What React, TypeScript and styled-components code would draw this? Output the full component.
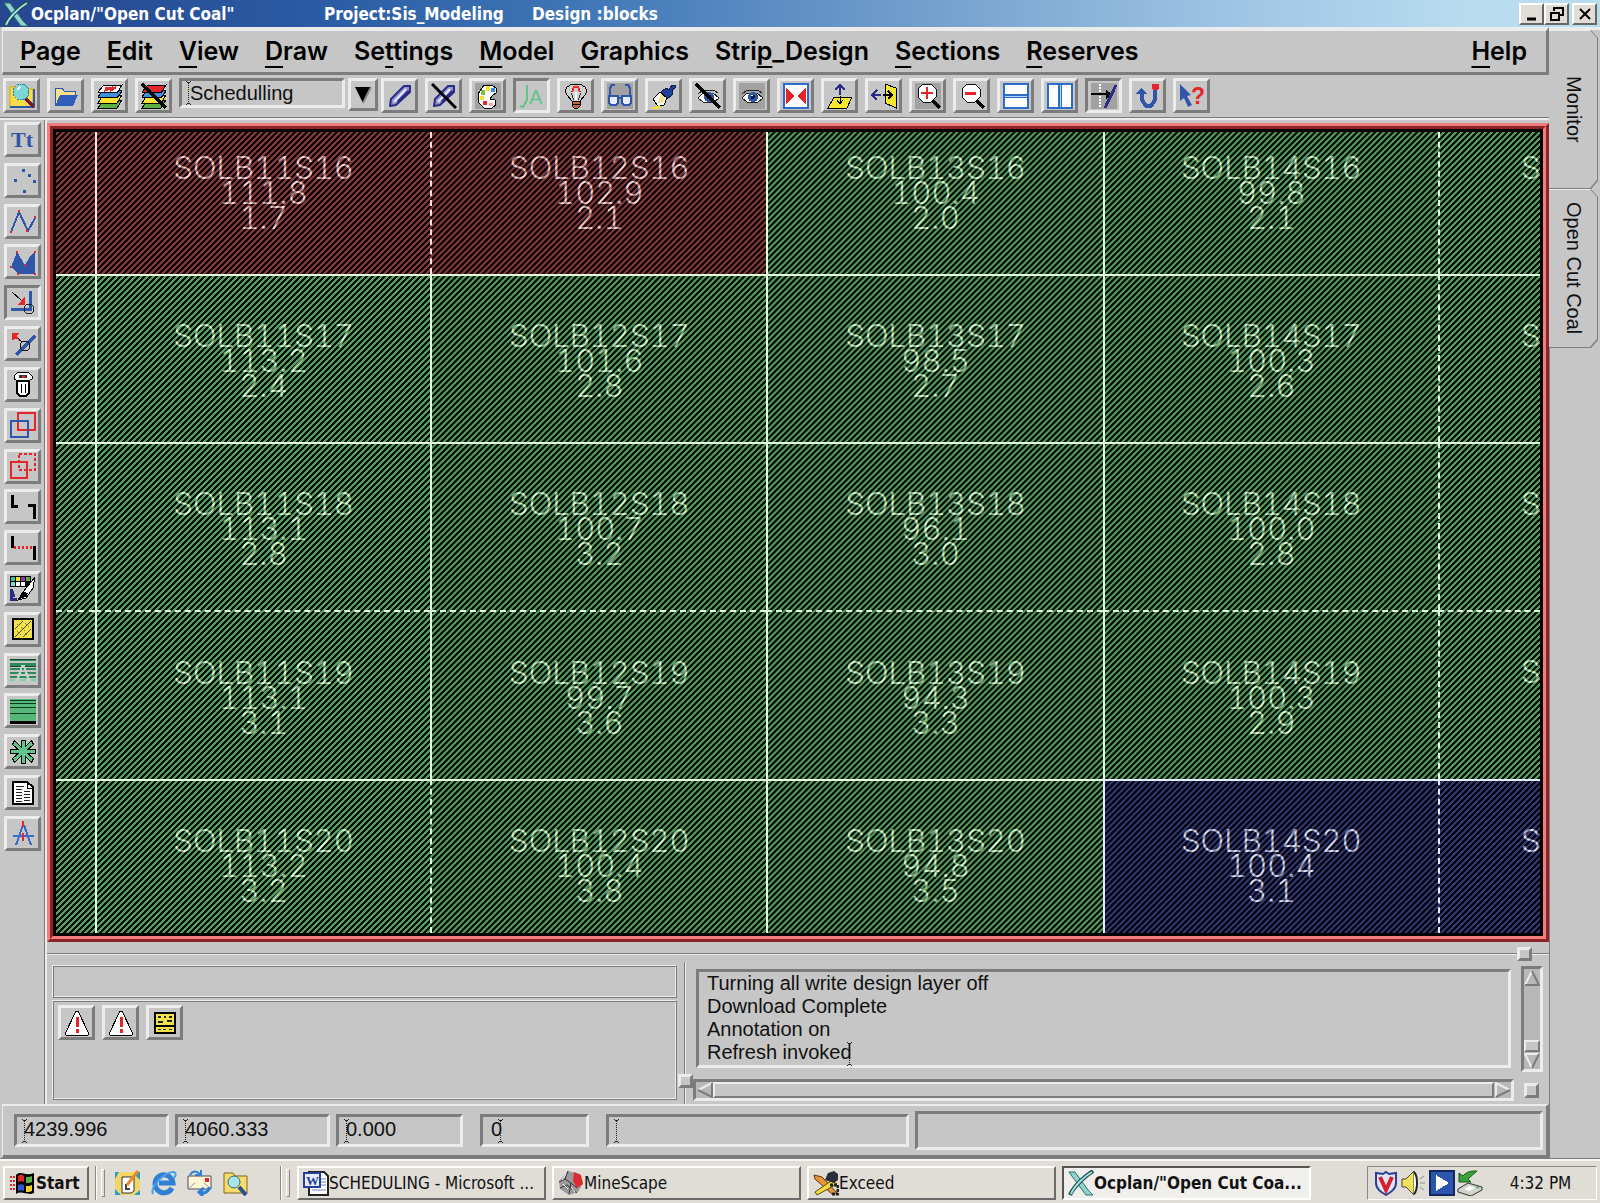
import React from "react";
import styled, { createGlobalStyle, css } from "styled-components";

const face = "#c6c6c6";
const light = "#ececec";
const dark = "#7c7c7c";
const sans = '"Liberation Sans", Arial, sans-serif';
const tahoma = '"DejaVu Sans Condensed", "DejaVu Sans", Tahoma, sans-serif';
const blue = "#2f56a8";
const red = "#e5252a";

const raised = css`
  border-style: solid;
  border-color: ${light} ${dark} ${dark} ${light};
`;
const sunken = css`
  border-style: solid;
  border-color: ${dark} ${light} ${light} ${dark};
`;

const GlobalStyle = createGlobalStyle`
  *, *::before, *::after { box-sizing: border-box; }
  body { margin: 0; background: ${face}; color: #111; font-family: ${sans}; }
  button, input, select { font: inherit; color: inherit; margin: 0; padding: 0; border-radius: 0; }
  svg { display: block; }
`;

const Screen = styled.div`
  display: flex;
  flex-direction: column;
  min-height: 100vh;
`;

/* ---------- title bar ---------- */

const TitleBar = styled.header`
  display: flex;
  align-items: center;
  height: 27px;
  padding: 0 3px;
  background: linear-gradient(90deg, #26478f 0%, #2a5ba4 20%, #3f76b6 36%, #6e9ccb 56%, #9cc3e3 76%, #b9dcef 92%, #b9dcef 100%);
  color: #fff;
  font: bold 17px/22px ${tahoma};
`;
const TitleText = styled.h1`
  display: flex;
  flex: 1;
  margin: 0 0 0 2px;
  font: inherit;
`;
const TitlePart = styled.span<{ $w?: number }>`
  flex: 0 0 ${(p) => (p.$w ? p.$w + "px" : "auto")};
  white-space: nowrap;
`;
const WindowButton = styled.button<{ $apart?: boolean }>`
  display: grid;
  place-items: center;
  width: 25px;
  height: 22px;
  margin-left: ${(p) => (p.$apart ? 3 : 0)}px;
  background: #e0dcd6;
  border: 2px solid;
  border-color: #fff #666 #666 #fff;
`;

/* ---------- window body ---------- */

const Body = styled.div`
  display: flex;
  flex: 1;
`;
const Main = styled.main`
  display: flex;
  flex-direction: column;
  flex: 1;
  min-width: 0;
`;
const MenuBar = styled.nav`
  display: flex;
  align-items: center;
  height: 48px;
  margin-left: 2px;
  padding: 0 6px 2px 4px;
  border-width: 4px 3px 3px 1px;
  ${raised}
`;
const MenuItem = styled.button<{ $end?: boolean }>`
  margin-left: ${(p) => (p.$end ? "auto" : "0")};
  padding: 0 13px;
  border: 0;
  background: none;
  color: #000;
  font: 600 25px/32px Inter, ${sans};
  white-space: nowrap;
`;
const Mnemonic = styled.span`
  text-decoration: underline 2px;
  text-underline-offset: 6px;
  text-decoration-skip-ink: none;
`;
const Toolbar = styled.div`
  display: flex;
  align-items: flex-start;
  gap: 7px;
  padding: 3px 4px 4px 3px;
  border-bottom: 1px solid ${dark};
`;
const ToolButton = styled.button<{ $pressed?: boolean }>`
  display: grid;
  place-items: center;
  flex: none;
  width: 37px;
  height: 35px;
  background: ${face};
  border-width: 3px;
  ${(p) => (p.$pressed ? sunken : raised)}
`;
const ComboLabel = styled.label`
  position: relative;
  width: 166px;
`;
const ComboSelect = styled.select`
  display: block;
  appearance: none;
  width: 100%;
  height: 30px;
  padding-left: 8px;
  background: ${face};
  border-width: 3px;
  ${sunken}
  font: 20px/24px ${sans};
`;
const ComboCaret = styled.span`
  position: absolute;
  left: 6px;
  top: 3px;
  pointer-events: none;
`;
const ComboArrow = styled(ToolButton)`
  width: 30px;
  height: 33px;
  margin: 0 -4px;
`;
const Work = styled.div`
  display: flex;
  flex: 1;
  border-top: 2px solid ${light};
`;
const Rail = styled.div`
  flex: 0 0 45px;
  padding: 2px 3px 0 4px;
  border-right: 1px solid ${dark};
`;
const RailTools = styled.div`
  display: flex;
  flex-direction: column;
  justify-content: space-between;
  height: 729px;
`;
const Content = styled.div`
  display: flex;
  flex-direction: column;
  flex: 1;
  min-width: 0;
  border-left: 2px solid ${light};
`;

/* ---------- block plan ---------- */

const PlanFrame = styled.section`
  display: flex;
  flex: 1;
  margin: 3px 0 11px;
  border: 3px solid;
  border-color: #f57c7c #8c2427 #8c2427 #f57c7c;
`;
const PlanInner = styled.div`
  display: flex;
  flex: 1;
  padding: 3px;
  background: #050002;
  border: 3px solid;
  border-color: #8c2427 #f57c7c #f57c7c #8c2427;
`;
const Plan = styled.div`
  display: grid;
  flex: 1;
  grid-template-columns: 39fr 335fr 336fr 336fr 335fr 102fr;
  grid-template-rows: 142fr 168fr 168fr 169fr 154fr;
`;
type Tone = "red" | "green" | "blue";
const tones: Record<Tone, { stripe: string; gap: string; ink: string; line: string }> = {
  red: { stripe: "#84393d", gap: "#140304", ink: "#ffd6d6", line: "#ffe2e0" },
  green: { stripe: "#55a05c", gap: "#030d05", ink: "#d8ffd2", line: "#e2fbd8" },
  blue: { stripe: "#343971", gap: "#040416", ink: "#dfe3ff", line: "#e4ecff" },
};
const Cell = styled.div<{ $tone: Tone; $left: string; $top: string; $pad?: number; $clip?: boolean }>`
  position: relative;
  display: flex;
  flex-direction: column;
  justify-content: ${(p) => (p.$pad ? "flex-start" : "flex-end")};
  min-width: 0;
  padding: ${(p) => (p.$pad ? `${p.$pad}px 0 0` : "0 0 44px")};
  overflow: hidden;
  text-align: ${(p) => (p.$clip ? "left" : "center")};
  text-indent: ${(p) => (p.$clip ? "81px" : "0")};
  color: ${(p) => tones[p.$tone].ink};
  font: 300 31px/25px Inter, ${sans};
  font-variant-numeric: tabular-nums;
  border: 0 solid ${(p) => tones[p.$tone].line};
  border-left-style: ${(p) => p.$left};
  border-top-style: ${(p) => p.$top};
  border-left-width: 2px;
  border-top-width: 2px;
  background: ${(p) => {
    const t = tones[p.$tone];
    return `linear-gradient(135deg, ${t.gap} 25%, ${t.stripe} 25%, ${t.stripe} 50%, ${t.gap} 50%, ${t.gap} 75%, ${t.stripe} 75%) 0 0 / 6px 6px`;
  }};
  background-attachment: fixed;

  &::after {
    content: "";
    position: absolute;
    inset: 0;
    background: linear-gradient(135deg, #0006 25%, #0000 25%, #0000 50%, #0006 50%, #0006 75%, #0000 75%) 0 0 / 6px 6px fixed;
  }
`;
const CellLine = styled.span`
  display: block;
`;

/* ---------- message area ---------- */

const Lower = styled.section`
  position: relative;
  display: grid;
  grid-template-columns: 637fr 865fr;
  height: 151px;
  border-top: 1px solid ${dark};
  box-shadow: inset 0 1px ${light};
`;
const Grip = styled.span<{ $x: string; $y: number }>`
  position: absolute;
  left: ${(p) => p.$x};
  top: ${(p) => p.$y}px;
  width: 15px;
  height: 14px;
  background: ${face};
  border-width: 3px;
  ${raised}
`;
const LeftPane = styled.div`
  display: flex;
  flex-direction: column;
  gap: 2px;
  padding: 11px 7px 4px 5px;
`;
const Groove = styled.div<{ $grow?: boolean }>`
  display: flex;
  align-items: flex-start;
  gap: 7px;
  flex: ${(p) => (p.$grow ? "1" : "0 0 33px")};
  padding: 4px 5px;
  border: 1px solid;
  border-color: ${light} ${dark} ${dark} ${light};
  box-shadow: inset 1px 1px ${dark}, inset -1px -1px ${light};
`;
const RightPane = styled.div`
  position: relative;
  display: grid;
  grid-template-columns: 1fr 24px;
  grid-template-rows: 106px 22px;
  gap: 7px;
  margin-top: 8px;
  padding: 4px 4px 0 8px;
  border-left: 1px solid ${dark};
  box-shadow: inset 1px 0 ${light};
`;
const Log = styled.div`
  margin: 3px 3px 4px;
  padding: 0 8px;
  border-width: 3px;
  ${sunken}
  font: 20px/23px ${sans};
`;
const LogLine = styled.p`
  display: flex;
  margin: 0;
`;
const LogCaret = styled.span`
  margin: 1px 0 -1px -6px;
`;
const Scroll = styled.div<{ $vertical?: boolean }>`
  display: flex;
  flex-direction: ${(p) => (p.$vertical ? "column" : "row")};
  border-width: 3px;
  background: #b8b8b8;
  ${sunken}
  width: ${(p) => (p.$vertical ? "22px" : "auto")};
`;
const ScrollArrow = styled.button`
  display: grid;
  place-items: center;
  flex: 0 0 17px;
  border: 0;
  background: none;
`;
const Thumb = styled.span<{ $bar?: boolean }>`
  flex: ${(p) => (p.$bar ? "1" : "0 0 12px")};
  margin-top: ${(p) => (p.$bar ? "0" : "auto")};
  background: ${face};
  border-width: 2px;
  ${raised}
`;
const Corner = styled.span`
  width: 15px;
  height: 15px;
  margin: 4px 0 0 3px;
  background: ${face};
  border-width: 3px;
  ${raised}
`;

/* ---------- status bar ---------- */

const StatusBar = styled.footer`
  display: flex;
  align-items: center;
  height: 54px;
  margin-left: 2px;
  padding: 0 3px 0 11px;
  border-width: 2px 3px 3px 1px;
  ${raised}
`;
const StatusField = styled.label<{ $w: number; $after?: number; $tall?: boolean }>`
  display: flex;
  align-items: center;
  flex: ${(p) => `${p.$w} 1 ${p.$w}px`};
  min-width: 0;
  height: ${(p) => (p.$tall ? 39 : 33)}px;
  margin-right: ${(p) => p.$after || 0}px;
  padding-left: 4px;
  border-width: 3px;
  ${sunken}
`;
const StatusInput = styled.input<{ $short?: boolean }>`
  flex: ${(p) => (p.$short ? "0 0 12px" : "1")};
  min-width: 0;
  width: ${(p) => (p.$short ? "12px" : "auto")};
  margin-left: ${(p) => (p.$short ? "4px" : "-4px")};
  margin-right: ${(p) => (p.$short ? "-6px" : "0")};
  padding: 0 0 3px;
  border: 0;
  background: none;
  font: 20px/24px ${sans};
`;

/* ---------- side tabs ---------- */

const TabStrip = styled.aside`
  flex: 0 0 51px;
  display: flex;
  flex-direction: column;
  border-top: 3px solid ${light};
`;
const SideTab = styled.button`
  position: relative;
  flex: none;
  width: 49px;
  height: 159px;
  border: 0;
  background: ${dark};
  font: 20px/24px ${sans};
  clip-path: polygon(0 0, 42px 0, 100% 8px, 100% calc(100% - 8px), 42px 100%, 0 100%);

  &::before {
    content: "";
    position: absolute;
    inset: 0 1px 1px 0;
    background: ${face};
    border-top: 1px solid ${light};
    clip-path: polygon(0 0, 41px 0, 100% 8px, 100% calc(100% - 8px), 41px 100%, 0 100%);
  }
`;
const SideTabText = styled.span`
  position: relative;
  display: block;
  width: 24px;
  margin-left: 13px;
  writing-mode: vertical-rl;
  white-space: nowrap;
`;
const TabRest = styled.div`
  flex: 1;
  border-left: 1px solid ${dark};
`;

/* ---------- taskbar ---------- */

const Taskbar = styled.footer`
  display: flex;
  align-items: center;
  height: 45px;
  padding: 3px 3px 0;
  background: #e0dcd6;
  border-top: 1px solid ${dark};
  box-shadow: inset 0 2px #f8f6f2;
  font: 17px/22px ${tahoma};
`;
const TaskButton = styled.button<{ $active?: boolean }>`
  display: flex;
  align-items: center;
  flex: 249 1 0;
  min-width: 0;
  max-width: 249px;
  height: 34px;
  margin-right: 6px;
  padding: 0 4px;
  border: 2px solid;
  border-color: ${(p) => (p.$active ? "#555 #fff #fff #555" : "#fff #6b6b6b #6b6b6b #fff")};
  background: ${(p) => (p.$active ? "#f1efec" : "#e0dcd6")};
  font-weight: ${(p) => (p.$active ? "bold" : "normal")};
  white-space: nowrap;
`;
const StartButton = styled.button`
  display: flex;
  align-items: center;
  gap: 1px;
  width: 86px;
  height: 34px;
  padding-left: 4px;
  border: 2px solid;
  border-color: #fff #6b6b6b #6b6b6b #fff;
  background: #e0dcd6;
  font-weight: bold;
`;
const Divider = styled.span`
  width: 10px;
  height: 34px;
  margin: 0 7px 0 6px;
  border-left: 1px solid #8c8984;
  box-shadow: inset 1px 0 #fff;

  &::after {
    content: "";
    display: block;
    width: 4px;
    height: 28px;
    margin: 3px 0 0 5px;
    border: 1px solid;
    border-color: #fff #8c8984 #8c8984 #fff;
  }
`;
const QuickLaunch = styled.div`
  display: flex;
  gap: 10px;
  width: 162px;
  padding-left: 3px;
`;
const QuickButton = styled.button`
  border: 0;
  background: none;
`;
const Tray = styled.div`
  display: flex;
  align-items: center;
  gap: 2px;
  width: 230px;
  height: 34px;
  margin-left: auto;
  padding-left: 5px;
  border: 1px solid;
  border-color: #8c8984 #fff #fff #8c8984;
`;
const Clock = styled.time`
  margin: 0 auto;
`;

/* ---------- drawings ---------- */

const Pic = ({ children, shade, soft }: { children: React.ReactNode; shade?: boolean; soft?: boolean }) => (
  <svg width="26" height="26" viewBox="0 0 26 26" fill="none" shapeRendering={soft ? "auto" : "crispEdges"} aria-hidden="true">
    {shade && <rect width="26" height="26" fill="#a2a2a2" />}
    {children}
  </svg>
);

const Caret = () => (
  <svg width="7" height="24" viewBox="0 0 7 24" fill="none" stroke="#222" shapeRendering="crispEdges" aria-hidden="true">
    <path d="M1 0.5h1M5 0.5h1M2 1.5h3M2 22.5h3M1 23.5h1M5 23.5h1" />
    <path d="M3.5 2v20" strokeDasharray="1 1" />
  </svg>
);

const Tri = ({ dir }: { dir: "up" | "down" | "left" | "right" }) => {
  const shapes = {
    up: ["M8 1L1 15", "M1 15H15L8 1"],
    down: ["M8 15L1 1H15", "M15 1L8 15"],
    left: ["M1 8L15 1", "M15 1V15L1 8"],
    right: ["M1 15V1L15 8", "M15 8L1 15"],
  }[dir];
  return (
    <svg width="16" height="16" viewBox="0 0 16 16" fill="none" strokeWidth="2" aria-hidden="true">
      <path d={shapes[0]} stroke={light} />
      <path d={shapes[1]} stroke={dark} />
    </svg>
  );
};

const XLogo = () => (
  <Pic soft>
    <path d="M1 2h6l13 18 5 5h-7L6 9z" fill="#8fd3cb" stroke="#2d6f74" />
    <path d="M25 1C17 6 6 16 2 25" stroke="#1b4a55" strokeWidth="4" />
    <path d="M24 2C17 6 6 16 3 24" stroke="#a4e4dc" strokeWidth="2" />
  </Pic>
);
const sheets = (top: string) => (
  <>
    <path d="M6 17h19l-5 8H1z" fill="#5cb043" stroke="#000" />
    <path d="M6 12h19l-5 8H1z" fill="#f6e332" stroke="#000" />
    <path d="M6 7l6 1 6-1 7 1-5 7-6-1-6 1-7-1z" fill="#3f8fe0" stroke="#000" />
    <path d="M7 2l6 1 12-1-5 8-6-1-6 1-7-1z" fill={top} stroke="#000" />
  </>
);
const Preview = () => (
  <Pic>
    <path d="M1 4h10v2h13v18H1z" fill="#f8dc4a" stroke="#e0c030" strokeWidth="2" />
    <path d="M1 24h24V6" stroke="#2f56a8" strokeWidth="2" />
    <path d="M15 14l10 10" stroke="#7a1c2c" strokeWidth="4" />
    <circle cx="12" cy="9" r="8" fill="#7fd6da" stroke="#2a7f8c" strokeDasharray="2 1" />
    <path d="M8 7l3-3" stroke="#fff" strokeWidth="2" />
  </Pic>
);
const OpenFolder = () => (
  <Pic>
    <path d="M2 22V5h7l2 3h11v5" fill="#f8e08a" stroke="#2f56a8" />
    <path d="M7 12h18l-5 11H2z" fill="#2f5fb8" />
  </Pic>
);
const Layers = () => (
  <Pic>
    {sheets("#fff")}
    <path d="M7 8l9-4M13 8l6-4M8 5h4" stroke={red} strokeWidth="2" />
  </Pic>
);
const LayersOff = () => (
  <Pic>
    {sheets(red)}
    <path d="M1 1l24 24" stroke="#000" strokeWidth="3" />
  </Pic>
);
const clip = (
  <g strokeLinejoin="round">
    <path d="M3 23l1-7L17 3h6v6L9 22z" fill="#8f96cc" stroke="#2c2c86" strokeWidth="2" />
    <path d="M7 19L19 6" stroke="#e6e8f6" strokeWidth="2" />
    <path d="M11 19L22 8" stroke="#2c2c86" strokeWidth="3" />
  </g>
);
const ClipIcon = () => <Pic soft>{clip}</Pic>;
const ClipOff = () => (
  <Pic soft>
    {clip}
    <path d="M1 1l24 24" stroke="#000" strokeWidth="3" />
  </Pic>
);
const Palette = () => (
  <Pic shade>
    <path d="M9 2h8l4 3v5l-4 3-2 3 5 1 1 5-4 3H9l-5-5-1-9z" fill="#fff" stroke="#000" strokeWidth="1" />
    <path d="M11 3h4v5h-4z" fill="#f4e22e" />
    <path d="M6 7h4v5H6z" fill="#7cc142" />
    <path d="M16 5h4v4h-4z" fill="#2f8fe0" />
    <path d="M5 13h4v4H5z" fill="#f4e22e" />
    <path d="M8 18h4v4H8z" fill={red} />
    <path d="M14 20h4v3h-4z" fill="#f7a8b0" />
  </Pic>
);
const Ja = () => (
  <Pic soft>
    <path d="M8 2v15l-4 7-3-1" stroke="#5fc58a" strokeWidth="2" />
    <text x="10" y="21" fontFamily="Liberation Sans" fontSize="20" fill="#5fc58a">A</text>
  </Pic>
);
const Bulb = () => (
  <Pic>
    <path d="M9 1h8l5 3 2 4-2 4-5 6H9l-5-6-2-4 2-4z" fill="#cfcfcf" stroke="#000" strokeWidth="1" />
    <path d="M13 9v8" stroke="#fff" strokeWidth="2" />
    <path d="M9 9l2-5h4l2 5" stroke={red} strokeWidth="2" />
    <path d="M11 17L8 10M15 17l3-7" stroke="#333" strokeWidth="1" />
    <path d="M9 18h8v5l-2 2h-4l-2-2z" fill="#c7643a" stroke="#000" />
    <path d="M9 21h8" stroke="#000" />
  </Pic>
);
const Glasses = () => (
  <Pic shade>
    <path d="M2 13h9v7l-2 2H4l-2-2zM15 13h9v7l-2 2h-5l-2-2z" fill="#e6ecfa" stroke={blue} strokeWidth="2" />
    <path d="M11 15h4M3 13V5l2-3h3M23 13V5l-2-3h-3" stroke={blue} strokeWidth="2" />
  </Pic>
);
const Torch = () => (
  <Pic>
    <path d="M15 5l3 2 3-5h3v3l-3 2v5l-5 4-6-7z" fill="#1f3f9a" stroke="#10204e" />
    <path d="M9 9l7 6-3 7H6l-4-6z" fill="#fff" stroke="#000" />
    <path d="M10 11l4 4-2 5H7z" fill="#f2e39a" />
    <path d="M1 25h5l3-2" stroke="#f4e22e" strokeWidth="3" />
  </Pic>
);
const eye = (
  <>
    <path d="M3 15l5-5h10l6 5-5 4H8z" fill="#fff" stroke="#222" />
    <circle cx="14" cy="14" r="5" fill={blue} />
    <circle cx="14" cy="14" r="2" fill="#101840" />
    <path d="M12 12h2v1h-2z" fill="#fff" />
    <path d="M3 11l5-4h11l4 3" stroke="#222" />
  </>
);
const EyeOff = () => (
  <Pic>
    {eye}
    <path d="M1 1l24 24" stroke="#000" strokeWidth="3" />
  </Pic>
);
const Eye = () => <Pic shade>{eye}</Pic>;
const FitView = () => (
  <Pic>
    <rect x="1" y="1" width="24" height="24" fill="#fff" stroke="#2a6cc8" strokeWidth="2" />
    <path d="M3 5l9 8-9 8zM23 5l-9 8 9 8z" fill={red} />
  </Pic>
);
const PlaneUp = () => (
  <Pic>
    <path d="M7 14h18l-5 11H1z" fill="#f7e82e" stroke="#000" strokeWidth="1" />
    <path d="M13 12V3" stroke="#2c2c86" strokeWidth="2" />
    <path d="M8 7l5-5 5 5" stroke="#2c2c86" strokeWidth="2" />
    <path d="M13 13v7M10 17l3 4 3-4" stroke="#000" strokeWidth="1" />
  </Pic>
);
const PlaneSide = () => (
  <Pic>
    <path d="M14 1l11 4v20l-11-5z" fill="#f7e82e" stroke="#000" />
    <path d="M10 12H2M6 7l-5 5 5 5" stroke="#2c2c86" strokeWidth="2" />
    <path d="M12 12h8M17 8l4 4-4 4" stroke="#000" strokeWidth="2" />
  </Pic>
);
const Magnify = ({ plus }: { plus?: boolean }) => (
  <Pic shade={plus}>
    <path d="M17 17l8 8" stroke="#000" strokeWidth="4" />
    <path d="M8 1h8l5 5v8l-5 5H8l-5-5V6z" fill="#fff" stroke="#111" />
    <path d={plus ? "M12 4v12M6 10h12" : "M6 10h11"} stroke={red} strokeWidth={plus ? 2 : 3} />
  </Pic>
);
const Panes = ({ vertical }: { vertical?: boolean }) => (
  <Pic>
    <g stroke="#2a6cc8" strokeWidth="2">
      <rect x="1" y="1" width="24" height="24" fill="#fff" />
      <path d={vertical ? "M13 1v24" : "M1 13h24"} strokeWidth="4" />
      <path d={vertical ? "M13 2v22" : "M2 13h22"} stroke="#b4d4f4" strokeWidth="1" />
    </g>
  </Pic>
);
const Snap = () => (
  <Pic shade>
    <path d="M9 1v24" stroke="#fff" strokeWidth="2" strokeDasharray="2 1" />
    <path d="M0 11h20" stroke="#000" strokeWidth="2" />
    <path d="M15 7l6 4-6 5z" fill="#000" />
    <path d="M25 2L14 25" stroke="#2c2c86" strokeWidth="3" />
  </Pic>
);
const Undo = () => (
  <Pic>
    <path d="M7 9v8l4 6h5l4-6V7" stroke={blue} strokeWidth="4" />
    <path d="M1 11l5-6 7 6z" fill={blue} />
    <path d="M17 1h7v5l-2 1h-3l-2-1z" fill={red} />
  </Pic>
);
const Help = () => (
  <Pic soft>
    <path d="M1 1l11 11-4 1 5 9-4 2-4-9-4 3z" fill={blue} />
    <text x="12" y="21" fontFamily="Liberation Sans" fontWeight="bold" fontSize="23" fill={red}>?</text>
  </Pic>
);

const TextTool = () => (
  <Pic soft>
    <text x="1" y="20" fontFamily="Liberation Serif" fontWeight="bold" fontSize="22" fill={blue}>Tt</text>
  </Pic>
);
const Points = () => (
  <Pic>
    <path d="M12 2h3v3h-3zM18 7h3v3h-3zM4 12h3v3H4zM23 13h3v3h-3zM13 23h3v3h-3z" fill={blue} />
  </Pic>
);
const Polyline = () => (
  <Pic>
    <path d="M1 24L9 4l9 19 7-13" stroke={blue} strokeWidth="2" />
    <path d="M0 23h2v2H0zM8 2h2v2H8zM16 22h2v2h-2zM24 8h2v2h-2z" fill={red} />
  </Pic>
);
const Polygon = () => (
  <Pic>
    <path d="M1 18L7 3l8 13 6-10 4-3v22H8z" fill={blue} />
    <path d="M0 17h2v2H0zM6 2h2v2H6zM14 15h2v2h-2zM24 2h2v2h-2zM7 24h2v2H7zM24 24h2v2h-2z" fill={red} />
  </Pic>
);
const SnapCorner = () => (
  <Pic>
    <path d="M20 1v18H1" stroke={blue} strokeWidth="3" />
    <circle cx="19" cy="19" r="5" stroke="#222" strokeWidth="1" />
    <path d="M2 2l9 8" stroke="#000" strokeWidth="1" />
    <path d="M15 6v9H7l4-4z" fill={red} />
  </Pic>
);
const SnapLine = () => (
  <Pic>
    <path d="M25 5L6 24" stroke={blue} strokeWidth="3" />
    <circle cx="15" cy="15" r="5" stroke="#111" strokeWidth="1" />
    <path d="M12 11L6 6" stroke="#000" strokeWidth="1" />
    <path d="M2 2h7L6 5l2 3-3-1-2 2z" fill={red} stroke={red} />
  </Pic>
);
const Bin = () => (
  <Pic>
    <path d="M8 1h10l4 4v3l-4 2H8L4 8V5z" fill="#fff" stroke="#000" strokeWidth="1" />
    <path d="M7 10h12v12l-3 3h-6l-3-3z" fill="#fff" stroke="#000" strokeWidth="2" />
    <path d="M9 4h8v3H9z" fill="#333" />
    <path d="M12 5h3v2h-3z" fill={red} />
    <path d="M11 13v9M15 13v9" stroke="#000" />
  </Pic>
);
const CopyShape = () => (
  <Pic>
    <rect x="8" y="1" width="17" height="17" stroke={red} strokeWidth="2" />
    <rect x="1" y="9" width="17" height="16" stroke={blue} strokeWidth="2" />
  </Pic>
);
const MoveShape = () => (
  <Pic>
    <rect x="9" y="1" width="16" height="16" stroke={red} strokeWidth="2" strokeDasharray="3 2" />
    <rect x="1" y="9" width="16" height="16" stroke={red} strokeWidth="2" />
  </Pic>
);
const BreakLine = () => (
  <Pic>
    <path d="M2 1v11h6M18 11h6v14" stroke="#000" strokeWidth="3" />
  </Pic>
);
const JoinLine = () => (
  <Pic>
    <path d="M2 1v12M24 11v14" stroke="#000" strokeWidth="3" />
    <path d="M4 12h19" stroke={red} strokeWidth="3" strokeDasharray="2 2" />
  </Pic>
);
const Swatches = () => (
  <Pic>
    <rect y="1" width="21" height="11" fill="#000" />
    <path d="M1 2h4v4H1z" fill="#2fc0a8" />
    <path d="M6 2h4v4H6z" fill="#f4e22e" />
    <path d="M11 2h4v4h-4z" fill="#8d3aa0" />
    <path d="M16 2h4v4h-4z" fill="#5cb043" />
    <path d="M1 7h4v4H1z" fill="#7fd6da" />
    <path d="M6 7h4v4H6zM11 7h4v4h-4z" fill="#fff" />
    <path d="M1 14v10h6M2 16l2 6" stroke="#2c2c86" strokeWidth="3" />
    <path d="M25 2L13 17l-5 8 8-2 7-10z" fill="#fff" stroke="#000" strokeWidth="1" />
    <path d="M13 17l-4 7 7-2 2-4z" fill="#000" />
  </Pic>
);
const Pattern = () => (
  <Pic>
    <rect x="3" y="3" width="20" height="20" fill="#f4e24a" stroke="#000" strokeWidth="2" />
    <path d="M5 21L21 5M5 13l8-8M13 21l8-8" stroke="#4a4a30" />
    <path d="M7 15l4 4M11 11l4 4M15 7l4 4M7 8l3 3M15 17l3 3" stroke="#8a7a20" strokeDasharray="1 1" />
  </Pic>
);
const LineText = () => (
  <Pic>
    <path d="M0 2h26v2H0zM0 6h26v3H0zM0 11h26v2H0zM0 15h26v2H0zM0 19h26v2H0z" fill="#2d8a5a" />
    <path d="M0 2h26M0 9h26" stroke="#114a2a" />
    <path d="M7 24l5-15h2l5 15M9 18h8" stroke="#c6d2c8" strokeWidth="2" />
    <path d="M0 23h5M10 23h6M21 23h5" stroke="#7ed09a" strokeWidth="2" />
  </Pic>
);
const LineStyle = () => (
  <Pic>
    <rect y="1" width="26" height="24" fill="#55b878" />
    <path d="M0 2h26M0 5h26M0 9h26M0 15h26" stroke="#0a3a1c" strokeWidth="1" />
    <path d="M0 24h26" stroke="#000" strokeWidth="3" />
  </Pic>
);
const Star = () => (
  <Pic>
    <path d="M13 1v24M0 12h26M3 3l20 19M23 3L3 22" stroke="#000" strokeWidth="5" />
    <path d="M13 2v22M1 12h24M4 4l18 17M22 4L4 21" stroke="#5fc58a" strokeWidth="3" />
  </Pic>
);
const Report = () => (
  <Pic>
    <path d="M3 2h14l6 5v17H3z" fill="#fff" stroke="#000" strokeWidth="2" />
    <path d="M17 2v6h6" stroke="#000" />
    <path d="M6 6h8M6 9h6M14 11h6M6 12h6M14 14h6M6 15h6M14 17h6M6 18h6M14 20h6M6 21h6" stroke="#222" />
  </Pic>
);
const Compass = () => (
  <Pic>
    <path d="M13 5L6 25M14 5l7 20M3 16h21" stroke="#3c68c8" strokeWidth="2" />
    <path d="M13 1v6M13 13v8" stroke={red} strokeWidth="2" />
  </Pic>
);

const Warning = () => (
  <Pic>
    <path d="M12 1h2l11 23-1 1H2l-1-1z" fill="#fff" stroke="#000" strokeWidth="1" />
    <path d="M13 7v10M13 19v4" stroke={red} strokeWidth="3" />
  </Pic>
);
const Console = () => (
  <Pic>
    <rect x="3" y="3" width="20" height="20" fill="#f4e24a" stroke="#000" strokeWidth="2" />
    <path d="M3 16h20" stroke="#000" strokeWidth="2" />
    <path d="M6 6h3v2H6zM12 6h2v2h-2zM17 6h3v2h-3zM6 11h5v2H6zM15 10h5v2h-5zM6 19h3v1H6zM11 19h3v1h-3zM17 19h3v1h-3z" fill="#222" />
  </Pic>
);

const WinFlag = () => (
  <Pic soft>
    <path d="M1 7h5M1 11h5M1 15h5M1 19h5" stroke="#e5252a" strokeWidth="2" strokeDasharray="2 1" />
    <path d="M7 5c5-5 9 2 18-2v20c-7 3-12-3-18 1z" fill="#000" />
    <path d="M9 6c3-2 4-1 6 0v6c-2-1-4-1-6 0z" fill={red} />
    <path d="M17 7c2 0 4 0 6-1v6c-2 1-4 1-6 1z" fill="#5cb043" />
    <path d="M9 15c2-1 4-1 6 0v6c-2-1-4-1-6 0z" fill="#2a5bd0" />
    <path d="M17 16c2 0 4 0 6-1v6c-2 1-4 1-6 1z" fill="#f4d22e" />
  </Pic>
);
const Desk = () => (
  <Pic soft>
    <rect y="2" width="25" height="23" fill="#2a9bc4" />
    <path d="M4 2h17v4l4 4v10l-6 5H6l-6-6V9z" fill="#f3d566" />
    <path d="M7 7h12v14l-3 2H7z" fill="#fff" stroke="#333" />
    <path d="M11 14v5h4" stroke="#444" strokeWidth="2" />
    <path d="M23 1L12 15" stroke="#e58a24" strokeWidth="3" />
  </Pic>
);
const Explorer = () => (
  <Pic soft>
    <path d="M21 18A9 9 0 1 1 22 13H8" stroke="#2f7fd6" strokeWidth="5" />
    <path d="M2 24C-1 17 13 2 23 2c3 1 1 5 0 6" stroke="#4aa0e6" strokeWidth="2" />
  </Pic>
);
const Mail = () => (
  <Pic soft>
    <path d="M1 6h23v13H1z" fill="#fff5d4" stroke="#4a4a60" />
    <path d="M1 19l7-6M24 19l-7-6" stroke="#999" />
    <path d="M18 8h4v4h-4z" fill={red} />
    <path d="M3 5c3-5 8-4 10 0M8 5h6V0" stroke="#2f7fd6" strokeWidth="2" />
    <path d="M22 17c0 5-5 7-9 5M17 18l-5 4 4 4" stroke="#2f7fd6" strokeWidth="3" />
  </Pic>
);
const FindFolder = () => (
  <Pic soft>
    <path d="M1 3h9l2 3h12v17H1z" fill="#f7dc6a" stroke="#7a6a20" />
    <path d="M16 17l7 8" stroke="#2a4f8a" strokeWidth="4" />
    <circle cx="11" cy="12" r="6" fill="#a8e4ec" stroke="#3a6a7a" strokeWidth="1" />
  </Pic>
);
const Word = () => (
  <Pic soft>
    <path d="M6 2h15l4 4v19H6z" fill="#fff" stroke="#222" strokeWidth="2" />
    <path d="M18 9h5M18 12h5M18 15h5M9 20h14" stroke="#6a86c0" />
    <rect x="1" y="3" width="16" height="14" fill="#e8ecf8" stroke="#23409a" strokeWidth="2" />
    <text x="3" y="15" fontFamily="Liberation Serif" fontWeight="bold" fontSize="13" fill="#23409a">W</text>
  </Pic>
);
const Rock = () => (
  <Pic soft>
    <path d="M10 1l12 3 3 9-5 9-9 3-9-6-1-8z" fill="#9a9a9a" />
    <path d="M16 2l7 3 2 9-6 4-4-7z" fill="#dd2a34" />
    <path d="M10 1L7 9l-6 3M7 9l6 4-2 11M2 18l7-3 10 8M13 13l6 5" stroke="#333" />
    <path d="M8 4l-4 6M5 14l5 5M13 17l4 5" stroke="#fff" />
  </Pic>
);
const ExceedMark = () => (
  <Pic soft>
    <path d="M1 5l8 2 15 16-4 2L2 9z" fill="#e8963a" stroke="#5a3a10" />
    <path d="M24 14L4 25l-2-3 16-11z" fill="#f0dc3a" stroke="#5a4a10" />
    <path d="M12 10l3-7 6-2 4 3v6l-4 3z" fill="#2a2f38" />
    <path d="M17 15h8v9h-7" stroke="#222" strokeWidth="3" strokeDasharray="3 1" />
  </Pic>
);
const Shield = () => (
  <Pic soft>
    <path d="M13 2l3 2 7-1v10c0 6-5 9-10 12C8 22 3 19 3 13V3l7 1z" fill="#dfe4f4" stroke="#2b3f94" strokeWidth="2" />
    <path d="M7 7l6 13 6-13" stroke="#d8202c" strokeWidth="4" />
  </Pic>
);
const Speaker = () => (
  <Pic soft>
    <path d="M1 9h4l8-8v24l-8-8H1z" fill="#f0e05a" stroke="#444" />
    <path d="M13 2c4 4 4 18 0 22" fill="#fff" stroke="#222" strokeWidth="2" />
    <path d="M19 9l4-3M19 13h5M19 17l4 3" stroke="#888" />
  </Pic>
);
const Play = () => (
  <Pic>
    <rect x="1" y="1" width="24" height="24" fill="#2a56b0" stroke="#12275c" strokeWidth="2" />
    <path d="M7 5l13 8-13 8z" fill="#fff" />
  </Pic>
);
const Eject = () => (
  <Pic soft>
    <path d="M1 19l10-6 14 4v3l-11 6-13-4z" fill="#cfd4cc" stroke="#333" />
    <path d="M7 19l6-3 5 2-6 3z" fill="#fff" />
    <path d="M19 16l4 1-3 2z" fill="#58b050" />
    <path d="M2 12V3l4 3c4-5 9-5 14-5-3 3-6 5-9 8l3 3z" fill="#3aa23a" stroke="#145a14" />
  </Pic>
);

/* ---------- data ---------- */

const menus: [string, number][] = [
  ["Page", 0], ["Edit", 0], ["View", 0], ["Draw", 0], ["Settings", 2], ["Model", 0],
  ["Graphics", 0], ["Strip_Design", 4], ["Sections", 0], ["Reserves", 0], ["Help", 0],
];

type Tool = [string, React.ReactNode, boolean?];
const fileTools: Tool[] = [
  ["Preview page", <Preview />], ["Open design", <OpenFolder />], ["Layers", <Layers />], ["Layers off", <LayersOff />],
];
const viewTools: Tool[] = [
  ["Attach", <ClipIcon />], ["Detach", <ClipOff />], ["Palette", <Palette />], ["Annotate", <Ja />, true],
  ["Highlight", <Bulb />], ["Inspect", <Glasses />], ["Refresh", <Torch />], ["Hide", <EyeOff />], ["Show", <Eye />],
  ["Fit view", <FitView />], ["Plan view", <PlaneUp />], ["Section view", <PlaneSide />],
  ["Zoom in", <Magnify plus />], ["Zoom out", <Magnify />], ["Split rows", <Panes />], ["Split columns", <Panes vertical />],
  ["Snap", <Snap />, true], ["Undo", <Undo />], ["Context help", <Help />],
];
const drawTools: Tool[] = [
  ["Text", <TextTool />], ["Points", <Points />], ["Line", <Polyline />], ["Polygon", <Polygon />],
  ["Snap to point", <SnapCorner />, true], ["Snap to line", <SnapLine />], ["Delete", <Bin />], ["Copy", <CopyShape />],
  ["Move", <MoveShape />], ["Break", <BreakLine />], ["Join", <JoinLine />], ["Colours", <Swatches />],
  ["Pattern", <Pattern />], ["Annotation style", <LineText />], ["Line style", <LineStyle />], ["Symbol", <Star />],
  ["Report", <Report />], ["Measure", <Compass />],
];

const blocks: [string, string, string][][] = [
  [["SOLB11S16", "111.8", "1.7"], ["SOLB12S16", "102.9", "2.1"], ["SOLB13S16", "100.4", "2.0"], ["SOLB14S16", "99.8", "2.1"]],
  [["SOLB11S17", "113.2", "2.4"], ["SOLB12S17", "101.6", "2.8"], ["SOLB13S17", "98.5", "2.7"], ["SOLB14S17", "100.3", "2.6"]],
  [["SOLB11S18", "113.1", "2.8"], ["SOLB12S18", "100.7", "3.2"], ["SOLB13S18", "96.1", "3.0"], ["SOLB14S18", "100.0", "2.8"]],
  [["SOLB11S19", "113.1", "3.1"], ["SOLB12S19", "99.7", "3.6"], ["SOLB13S19", "94.3", "3.3"], ["SOLB14S19", "100.3", "2.9"]],
  [["SOLB11S20", "113.2", "3.2"], ["SOLB12S20", "100.4", "3.8"], ["SOLB13S20", "94.8", "3.5"], ["SOLB14S20", "100.4", "3.1"]],
];

const toneOf = (row: number, col: number): Tone =>
  row === 0 && col < 3 ? "red" : row === 4 && col > 3 ? "blue" : "green";

/* Labels sit at the foot of a block, save where the window cuts the block off. */
const padOf = (row: number, col: number) =>
  col === 5 && row === 0 ? 23 : col === 5 || row === 4 ? 47 : undefined;

const messages = ["Turning all write design layer off", "Download Complete", "Annotation on", "Refresh invoked"];

const Tools = ({ items }: { items: Tool[] }) => (
  <>
    {items.map(([name, icon, pressed]) => (
      <ToolButton key={name} type="button" aria-label={name} aria-pressed={pressed} $pressed={pressed}>
        {icon}
      </ToolButton>
    ))}
  </>
);

export default function App() {
  return (
    <Screen>
      <GlobalStyle />
      <TitleBar>
        <XLogo />
        <TitleText>
          <TitlePart $w={293}>Ocplan/"Open Cut Coal"</TitlePart>
          <TitlePart $w={208}>Project:Sis_Modeling</TitlePart>
          <TitlePart>Design :blocks</TitlePart>
        </TitleText>
        <WindowButton type="button" aria-label="Minimize">
          <svg width="16" height="16" stroke="#000" strokeWidth="3"><path d="M3 13h9" /></svg>
        </WindowButton>
        <WindowButton type="button" aria-label="Restore">
          <svg width="16" height="16" fill="none" stroke="#000" strokeWidth="2" shapeRendering="crispEdges">
            <path d="M5 5V2h9v7h-3M2 7h8v7H2z" />
          </svg>
        </WindowButton>
        <WindowButton type="button" aria-label="Close" $apart>
          <svg width="16" height="16" stroke="#000" strokeWidth="2"><path d="M3 3l10 10M13 3L3 13" /></svg>
        </WindowButton>
      </TitleBar>

      <Body>
        <Main>
          <MenuBar>
            {menus.map(([name, key]) => (
              <MenuItem key={name} type="button" $end={name === "Help"}>
                {name.slice(0, key)}
                <Mnemonic>{name[key]}</Mnemonic>
                {name.slice(key + 1)}
              </MenuItem>
            ))}
          </MenuBar>

          <Toolbar>
            <Tools items={fileTools} />
            <ComboLabel>
              <ComboSelect aria-label="Layer" defaultValue="Schedulling">
                <option>Schedulling</option>
              </ComboSelect>
              <ComboCaret><Caret /></ComboCaret>
            </ComboLabel>
            <ComboArrow type="button" aria-label="Choose layer">
              <svg width="18" height="18"><path d="M1 1h16L9 17z" fill="#000" /><path d="M17 1L9 17" stroke="#888" strokeWidth="2" /></svg>
            </ComboArrow>
            <Tools items={viewTools} />
          </Toolbar>

          <Work>
            <Rail>
              <RailTools><Tools items={drawTools} /></RailTools>
            </Rail>
            <Content>
              <PlanFrame aria-label="Block plan">
                <PlanInner>
                  <Plan>
                    {blocks.map((row, r) =>
                      [null, ...row, ["S"]].map((lines, c) => (
                        <Cell
                          key={`${r}-${c}`}
                          $tone={toneOf(r, c)}
                          $left={c === 0 ? "none" : c === 5 || (c === 2 && (r === 0 || r === 4)) ? "dashed" : "solid"}
                          $top={r === 0 ? "none" : r === 3 ? "dashed" : "solid"}
                          $pad={padOf(r, c)}
                          $clip={c === 5}
                        >
                          {lines && lines.map((t, i) => <CellLine key={i}>{t}</CellLine>)}
                        </Cell>
                      ))
                    )}
                  </Plan>
                </PlanInner>
              </PlanFrame>

              <Lower>
                <LeftPane>
                  <Groove />
                  <Groove $grow>
                    <ToolButton type="button" aria-label="Errors"><Warning /></ToolButton>
                    <ToolButton type="button" aria-label="Warnings"><Warning /></ToolButton>
                    <ToolButton type="button" aria-label="Console"><Console /></ToolButton>
                  </Groove>
                </LeftPane>
                <RightPane>
                  <Log role="log">
                    {messages.map((m, i) => (
                      <LogLine key={m}>
                        {m}
                        {i === messages.length - 1 && <LogCaret><Caret /></LogCaret>}
                      </LogLine>
                    ))}
                  </Log>
                  <Scroll $vertical>
                    <ScrollArrow type="button" aria-label="Scroll up"><Tri dir="up" /></ScrollArrow>
                    <Thumb />
                    <ScrollArrow type="button" aria-label="Scroll down"><Tri dir="down" /></ScrollArrow>
                  </Scroll>
                  <Scroll>
                    <ScrollArrow type="button" aria-label="Scroll left"><Tri dir="left" /></ScrollArrow>
                    <Thumb $bar />
                    <ScrollArrow type="button" aria-label="Scroll right"><Tri dir="right" /></ScrollArrow>
                  </Scroll>
                  <Corner />
                  <Grip $x="-7px" $y={112} />
                </RightPane>
                <Grip $x="calc(100% - 32px)" $y={-7} />
              </Lower>
            </Content>
          </Work>

          <StatusBar>
            <StatusField $w={155} $after={6}><Caret /><StatusInput aria-label="X" defaultValue="4239.996" /></StatusField>
            <StatusField $w={155} $after={6}><Caret /><StatusInput aria-label="Y" defaultValue="4060.333" /></StatusField>
            <StatusField $w={127} $after={17}><Caret /><StatusInput aria-label="Z" defaultValue="0.000" /></StatusField>
            <StatusField $w={109} $after={17}><StatusInput aria-label="Level" defaultValue="0" $short /><Caret /></StatusField>
            <StatusField $w={303} $after={6}><Caret /><StatusInput aria-label="Command" defaultValue="" /></StatusField>
            <StatusField $w={628} $tall><StatusInput aria-label="Status" defaultValue="" readOnly /></StatusField>
          </StatusBar>
        </Main>

        <TabStrip>
          <SideTab type="button"><SideTabText>Monitor</SideTabText></SideTab>
          <SideTab type="button"><SideTabText>Open Cut Coal</SideTabText></SideTab>
          <TabRest />
        </TabStrip>
      </Body>

      <Taskbar>
        <StartButton type="button"><WinFlag />Start</StartButton>
        <Divider />
        <QuickLaunch>
          <QuickButton type="button" aria-label="Show desktop"><Desk /></QuickButton>
          <QuickButton type="button" aria-label="Browser"><Explorer /></QuickButton>
          <QuickButton type="button" aria-label="Mail"><Mail /></QuickButton>
          <QuickButton type="button" aria-label="Find files"><FindFolder /></QuickButton>
        </QuickLaunch>
        <Divider />
        <TaskButton type="button"><Word />SCHEDULING - Microsoft ...</TaskButton>
        <TaskButton type="button"><Rock />MineScape</TaskButton>
        <TaskButton type="button"><ExceedMark />Exceed</TaskButton>
        <TaskButton type="button" $active><XLogo />Ocplan/"Open Cut Coa...</TaskButton>
        <Tray>
          <Shield /><Speaker /><Play /><Eject />
          <Clock>4:32 PM</Clock>
        </Tray>
      </Taskbar>
    </Screen>
  );
}
